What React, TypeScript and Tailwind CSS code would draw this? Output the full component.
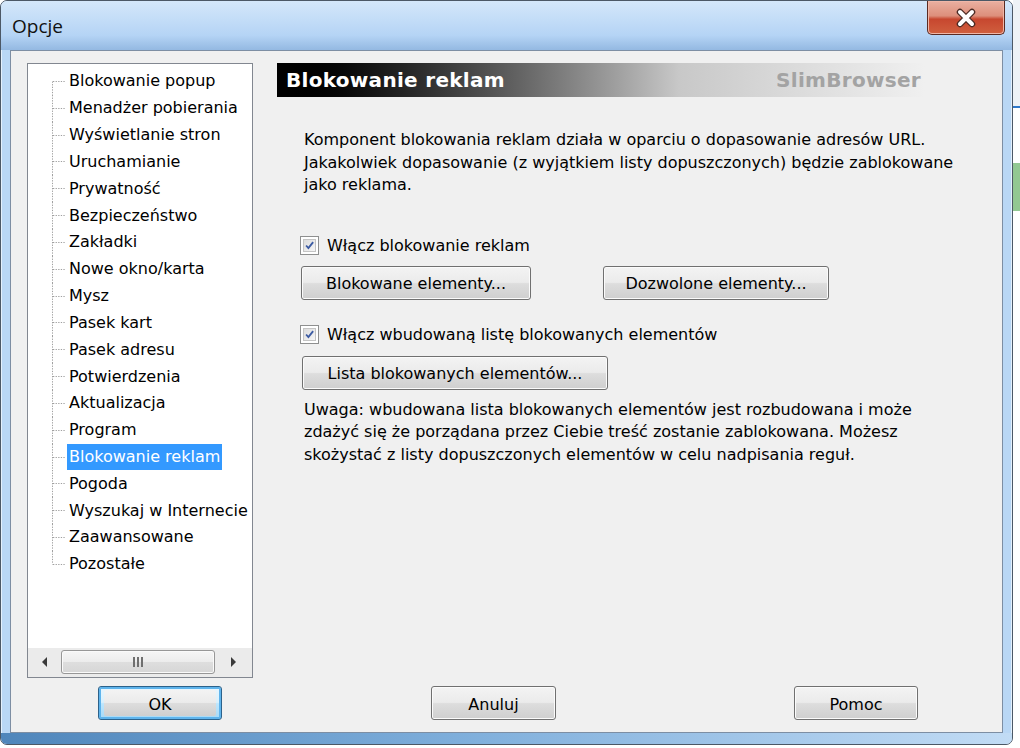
import React from "react"

const treeItems = [
  "Blokowanie popup",
  "Menadżer pobierania",
  "Wyświetlanie stron",
  "Uruchamianie",
  "Prywatność",
  "Bezpieczeństwo",
  "Zakładki",
  "Nowe okno/karta",
  "Mysz",
  "Pasek kart",
  "Pasek adresu",
  "Potwierdzenia",
  "Aktualizacja",
  "Program",
  "Blokowanie reklam",
  "Pogoda",
  "Wyszukaj w Internecie",
  "Zaawansowane",
  "Pozostałe",
]

const btn =
  "h-[34px] pt-[3px] rounded-[3px] border border-[#707070] bg-[linear-gradient(#f3f3f3_0%,#ebebeb_48%,#dddddd_52%,#cfcfcf_100%)] shadow-[inset_0_0_0_1px_#fbfbfb] flex items-center justify-center text-black"

function Connector({ first, last }: { first: boolean; last: boolean }) {
  return (
    <svg width="39" height="27" className="shrink-0">
      <line
        x1="24.5"
        y1={first ? 13.5 : 0}
        x2="24.5"
        y2={last ? 13.5 : 27}
        stroke="#a0a0a0"
        strokeWidth="1"
        strokeDasharray="1.3 1.3"
      />
      <line x1="25" y1="13.5" x2="38" y2="13.5" stroke="#a0a0a0" strokeWidth="1" strokeDasharray="1.3 1.3" />
    </svg>
  )
}

function Checkbox() {
  return (
    <span className="w-[19px] h-[19px] shrink-0 border border-[#8e8f8f] bg-white p-[2px]">
      <span className="block w-full h-full border border-[#c4c4c4] bg-linear-to-br from-[#dcdcdc] to-[#f6f6f6]">
        <svg viewBox="0 0 13 13" className="w-full h-full">
          <path d="M2.5 6.5 L5.2 9.5 L10.8 2.6" fill="none" stroke="#3c5ba3" strokeWidth="2.2" />
        </svg>
      </span>
    </span>
  )
}

export default function App() {
  return (
    <div
      className="w-[1020px] h-[748px] bg-white flex overflow-hidden text-[16px] text-black"
      style={{ fontFamily: '"DejaVu Sans", Verdana, sans-serif' }}
    >
      <div className="w-[1013px] h-[745px] shrink-0 rounded-[7px] border border-[#4c5866] bg-[#b9d7f5] flex flex-col overflow-hidden shadow-[inset_0_0_0_1px_#e4f0fc]">
        {/* title bar */}
        <div className="h-[49px] shrink-0 flex items-start justify-between bg-linear-to-b from-[#d4e7fa] via-[#b5d4f5] via-70% to-[#94b9e2]">
          <div
            className="pl-[11px] pt-[13px] text-[19px] leading-[24px] text-[#111]"
            style={{ fontFamily: '"Open Sans", "Noto Sans", sans-serif' }}
          >
            Opcje
          </div>
          <div className="mr-[7px] w-[78px] h-[34px] rounded-b-[5px] border border-t-0 border-[#5b2a22] bg-[linear-gradient(#eab0a1_0%,#dd8f7b_45%,#c7472f_55%,#d0603f_100%)] shadow-[inset_0_0_0_1px_#f0b7a8] flex items-center justify-center">
            <svg width="26" height="20" viewBox="0 0 26 20">
              <path d="M7 4 L19 16 M19 4 L7 16" stroke="#4a2a24" strokeWidth="6.5" strokeLinecap="round" />
              <path d="M7 4 L19 16 M19 4 L7 16" stroke="#ffffff" strokeWidth="4" strokeLinecap="round" />
            </svg>
          </div>
        </div>

        {/* client area */}
        <div className="flex-1 px-[9px] flex">
          <div className="flex-1 border border-[#7d8ea3] bg-[#f0f0f0] flex flex-col">
            <div className="flex pl-[16px] pt-[12px]">
              {/* tree */}
              <div className="w-[226px] h-[615px] shrink-0 border border-[#828790] bg-white flex flex-col overflow-hidden">
                <div className="flex-1 pt-[4px] overflow-hidden">
                  {treeItems.map((item, i) => (
                    <div key={item} className="h-[26.83px] flex items-center whitespace-nowrap">
                      <Connector first={i === 0} last={i === treeItems.length - 1} />
                      <span
                        className={
                          i === 14
                            ? "h-[26.83px] flex items-center px-[2px] bg-[#3399ff] text-white"
                            : "h-[26.83px] flex items-center px-[2px]"
                        }
                      >
                        {item}
                      </span>
                    </div>
                  ))}
                </div>
                {/* horizontal scrollbar */}
                <div className="h-[29px] shrink-0 bg-[#ebebeb] flex items-center px-[1px] pb-[2px]">
                  <div className="w-[32px] flex justify-center">
                    <svg width="8" height="12" viewBox="0 0 8 12">
                      <path d="M6 1 L1 6 L6 11 Z" fill="#3a3a3a" />
                    </svg>
                  </div>
                  <div className="w-[154px] h-[24px] rounded-[3px] border border-[#979797] bg-[linear-gradient(#f6f6f6_0%,#ececec_50%,#dedede_51%,#d6d6d6_100%)] shadow-[inset_0_0_0_1px_#fafafa] flex items-center justify-center gap-[2px]">
                    <span className="w-[2px] h-[10px] bg-[#6f6f6f]" />
                    <span className="w-[2px] h-[10px] bg-[#6f6f6f]" />
                    <span className="w-[2px] h-[10px] bg-[#6f6f6f]" />
                  </div>
                  <div className="flex-1 flex justify-center">
                    <svg width="8" height="12" viewBox="0 0 8 12">
                      <path d="M2 1 L7 6 L2 11 Z" fill="#3a3a3a" />
                    </svg>
                  </div>
                </div>
              </div>

              {/* right panel */}
              <div className="ml-[24px] w-[648px] flex flex-col">
                <div className="h-[34px] flex items-center justify-between pl-[9px] pr-[4px] bg-linear-to-r from-black via-[#c8c8c8] via-62% to-[#f0f0f0]">
                  <span className="text-[20px] font-bold text-white tracking-[0.3px]">Blokowanie reklam</span>
                  <span className="text-[20px] font-bold text-[#a3a3a3] tracking-[0.3px]">SlimBrowser</span>
                </div>
                <div className="pl-[23px]">
                  <p className="mt-[32px] pl-[4px] leading-[22.5px] w-[690px]">
                    Komponent blokowania reklam działa w oparciu o dopasowanie adresów URL.
                    <br />
                    Jakakolwiek dopasowanie (z wyjątkiem listy dopuszczonych) będzie zablokowane
                    <br />
                    jako reklama.
                  </p>
                  <div className="mt-[38px] h-[22px] flex items-center gap-[8px]">
                    <Checkbox />
                    <span>Włącz blokowanie reklam</span>
                  </div>
                  <div className="mt-[9px] flex">
                    <button className={btn + " ml-[1px] w-[230px]"}>Blokowane elementy...</button>
                    <button className={btn + " ml-[72px] w-[226px]"}>Dozwolone elementy...</button>
                  </div>
                  <div className="mt-[24px] h-[22px] flex items-center gap-[8px]">
                    <Checkbox />
                    <span>Włącz wbudowaną listę blokowanych elementów</span>
                  </div>
                  <div className="mt-[10px] flex">
                    <button className={btn + " ml-[2px] w-[306px]"}>Lista blokowanych elementów...</button>
                  </div>
                  <p className="mt-[9px] pl-[4px] leading-[22.5px] w-[690px]">
                    Uwaga: wbudowana lista blokowanych elementów jest rozbudowana i może
                    <br />
                    zdażyć się że porządana przez Ciebie treść zostanie zablokowana. Możesz
                    <br />
                    skożystać z listy dopuszczonych elementów w celu nadpisania reguł.
                  </p>
                </div>
              </div>
            </div>

            {/* bottom buttons */}
            <div className="mt-[8px] flex">
              <button className="ml-[87px] w-[124px] h-[34px] rounded-[3px] border border-[#2c628b] bg-[linear-gradient(#eaf6fd_0%,#d9f0fc_48%,#bee6fd_52%,#a7d9f5_100%)] shadow-[inset_0_0_0_2px_#5fb4ec] flex items-center justify-center">
                <span className="w-[112px] h-[26px] pt-[3px] rounded-[2px] bg-[linear-gradient(#f3f3f3_0%,#ebebeb_48%,#dddddd_52%,#cfcfcf_100%)] flex items-center justify-center">
                  OK
                </span>
              </button>
              <button className={btn + " ml-[209px] w-[125px]"}>Anuluj</button>
              <button className={btn + " ml-[238px] w-[124px]"}>Pomoc</button>
            </div>
          </div>
        </div>

        {/* bottom frame */}
        <div className="h-[11px] shrink-0 bg-linear-to-r from-[#4f86bb] via-[#7eaedb] via-45% to-[#c2dcf5]" />
      </div>

      {/* background window peeking on the right */}
      <div className="flex-1 flex flex-col bg-[#eef2f6]">
        <div className="h-[106px]" />
        <div className="h-[2px] bg-[#2f78c9]" />
        <div className="h-[55px] bg-white" />
        <div className="h-[48px] bg-[#92c892]" />
        <div className="flex-1 bg-white" />
      </div>
    </div>
  )
}
